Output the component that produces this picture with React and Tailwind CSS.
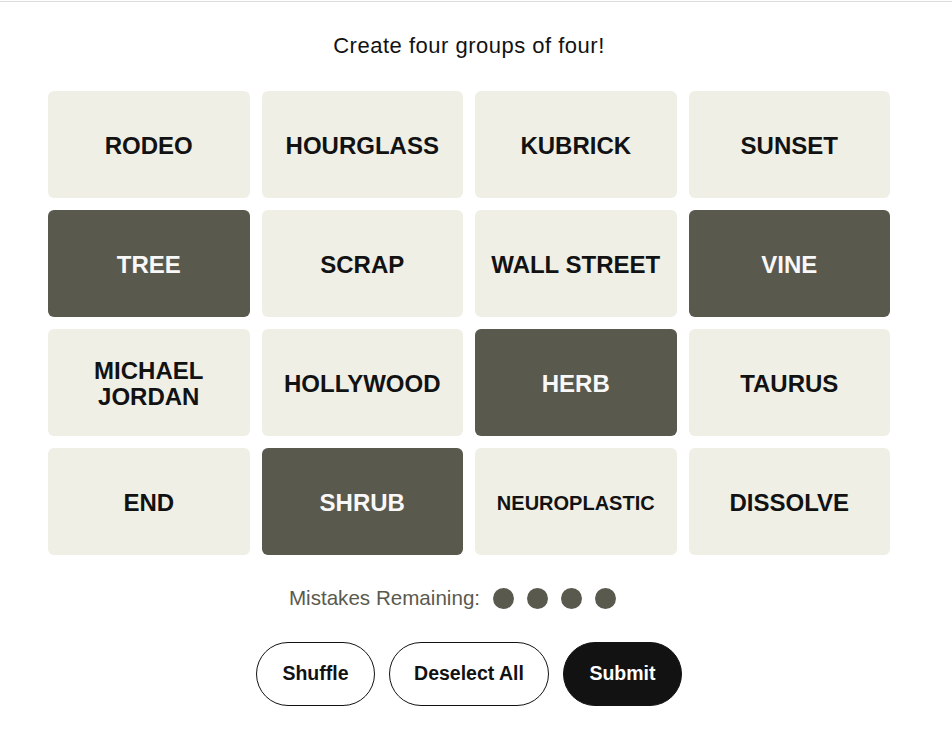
const words = [
  { label: "RODEO" },
  { label: "HOURGLASS" },
  { label: "KUBRICK" },
  { label: "SUNSET" },
  { label: "TREE", selected: true },
  { label: "SCRAP" },
  { label: "WALL STREET" },
  { label: "VINE", selected: true },
  { label: "MICHAEL JORDAN" },
  { label: "HOLLYWOOD" },
  { label: "HERB", selected: true },
  { label: "TAURUS" },
  { label: "END" },
  { label: "SHRUB", selected: true },
  { label: "NEUROPLASTIC", small: true },
  { label: "DISSOLVE" },
];

const Tile = ({ label, selected, small }) => (
  <button
    className={`h-[107px] rounded-md flex items-center justify-center px-3 pt-[3px] text-center font-bold uppercase leading-[1.1] ${
      selected ? "bg-[#5a594e] text-[#f8f8f8]" : "bg-[#efefe6] text-[#121212]"
    } ${small ? "text-[20px]" : "text-[24px]"}`}
  >
    {label}
  </button>
);

const App = () => {
  return (
    <div
      className="min-h-screen bg-white"
      style={{ fontFamily: '"Liberation Sans", Arial, sans-serif' }}
    >
      <div className="h-[2px] border-t border-[#dcdcdc] mt-px" />

      <div className="w-[938px] flex flex-col items-center">
        {/* Heading */}
        <p className="mt-[29px] text-[22px] leading-[28px] tracking-[0.5px] text-[#121212]">
          Create four groups of four!
        </p>

        {/* Board */}
        <div className="mt-[31px] w-[842px] grid grid-cols-4 gap-x-[12px] gap-y-[12px]">
          {words.map((w) => (
            <Tile key={w.label} {...w} />
          ))}
        </div>

        {/* Mistakes */}
        <div className="mt-[29px] flex items-center pr-[33px] h-[28px]">
          <span className="text-[20.6px] text-[#5a594e]">Mistakes Remaining:</span>
          <div className="ml-[13px] flex items-center gap-[13px]">
            <span className="w-[21px] h-[21px] rounded-full bg-[#5a594e]" />
            <span className="w-[21px] h-[21px] rounded-full bg-[#5a594e]" />
            <span className="w-[21px] h-[21px] rounded-full bg-[#5a594e]" />
            <span className="w-[21px] h-[21px] rounded-full bg-[#5a594e]" />
          </div>
        </div>

        {/* Controls */}
        <div className="mt-[30px] flex items-center gap-[14px]">
          <button className="w-[119px] h-[64px] rounded-full border border-[#121212] text-[19.5px] font-bold text-[#121212] bg-white">
            Shuffle
          </button>
          <button className="w-[160px] h-[64px] rounded-full border border-[#121212] text-[19.5px] font-bold text-[#121212] bg-white">
            Deselect All
          </button>
          <button className="w-[119px] h-[64px] rounded-full border border-[#121212] text-[19.5px] font-bold text-white bg-[#121212]">
            Submit
          </button>
        </div>
      </div>
    </div>
  );
};

export default App;
